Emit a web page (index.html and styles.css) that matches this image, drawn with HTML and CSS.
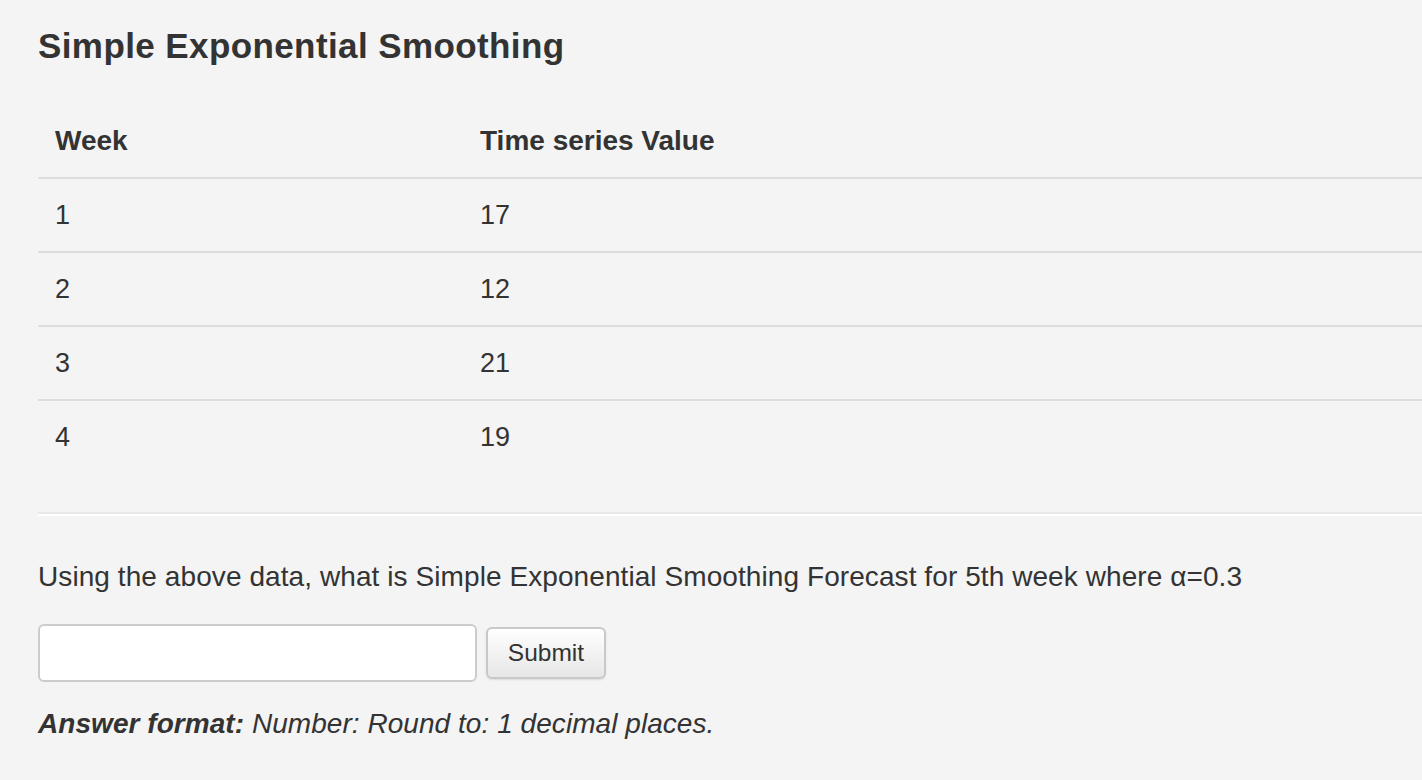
FILE: index.html
```html
<!DOCTYPE html>
<html>
<head>
<meta charset="utf-8">
<link rel="stylesheet" href="styles.css">
</head>
<body>
<div class="page">
  <h1 class="title">Simple Exponential Smoothing</h1>
  <div class="table-wrap">
    <table class="data">
      <thead>
        <tr><th class="c1">Week</th><th>Time series Value</th></tr>
      </thead>
      <tbody>
        <tr><td class="c1">1</td><td>17</td></tr>
        <tr><td class="c1">2</td><td>12</td></tr>
        <tr><td class="c1">3</td><td>21</td></tr>
        <tr><td class="c1">4</td><td>19</td></tr>
      </tbody>
    </table>
  </div>
  <hr class="sep">
  <p class="question">Using the above data, what is Simple Exponential Smoothing Forecast for 5th week where α=0.3</p>
  <div class="form-row">
    <input class="answer" type="text">
    <button class="submit">Submit</button>
  </div>
  <p class="format"><b>Answer format:</b> Number: Round to: 1 decimal places.</p>
</div>
</body>
</html>
```
FILE: styles.css
```css
html, body {
  margin: 0;
  padding: 0;
  background: #f4f4f4;
  overflow: hidden;
}
body {
  font-family: "Liberation Sans", Arial, sans-serif;
  color: #333;
  font-size: 27px;
}
.page {
  padding: 22px 0 0 38px;
}
.title {
  margin: 0;
  font-size: 35px;
  letter-spacing: 0.4px;
  line-height: 48px;
  font-weight: bold;
  color: #333;
}
.table-wrap {
  margin-top: 35px;
  width: 1420px;
}
.data {
  width: 100%;
  border-collapse: collapse;
}
.data th, .data td {
  text-align: left;
  padding: 17px;
  line-height: 38px;
  font-size: 27px;
}
.data th {
  font-size: 28px;
  font-weight: bold;
  border-bottom: 2px solid #dddddd;
}
.data tbody tr td {
  border-bottom: 2px solid #dddddd;
}
.data tbody tr:last-child td {
  border-bottom: none;
}
.data .c1 {
  width: 391px;
}
.sep {
  margin: 39px 0 0 0;
  border: 0;
  border-top: 2px solid #e8e8e8;
  border-bottom: 2px solid #ffffff;
  height: 0;
}
.question {
  margin: 41px 0 0 0;
  font-size: 28px;
  line-height: 40px;
  letter-spacing: 0.08px;
}
.form-row {
  display: flex;
  align-items: center;
  gap: 9px;
  margin-top: 27px;
}
.answer {
  width: 439px;
  height: 58px;
  box-sizing: border-box;
  border: 2px solid #cccccc;
  border-radius: 6px;
  background: #fff;
  font-size: 26px;
  padding: 0 12px;
  margin: 0;
}
.submit {
  width: 120px;
  height: 52px;
  box-sizing: border-box;
  border: 2px solid #c8c8c8;
  border-radius: 6px;
  background: linear-gradient(#ffffff, #e6e6e6);
  font-family: "Liberation Sans", Arial, sans-serif;
  font-size: 24.5px;
  color: #333;
  margin: 0;
  padding: 0;
  box-shadow: 0 1px 2px rgba(0,0,0,0.1);
}
.format {
  margin: 22px 0 0 0;
  font-size: 28px;
  letter-spacing: 0.05px;
  font-style: italic;
  line-height: 40px;
}
```
